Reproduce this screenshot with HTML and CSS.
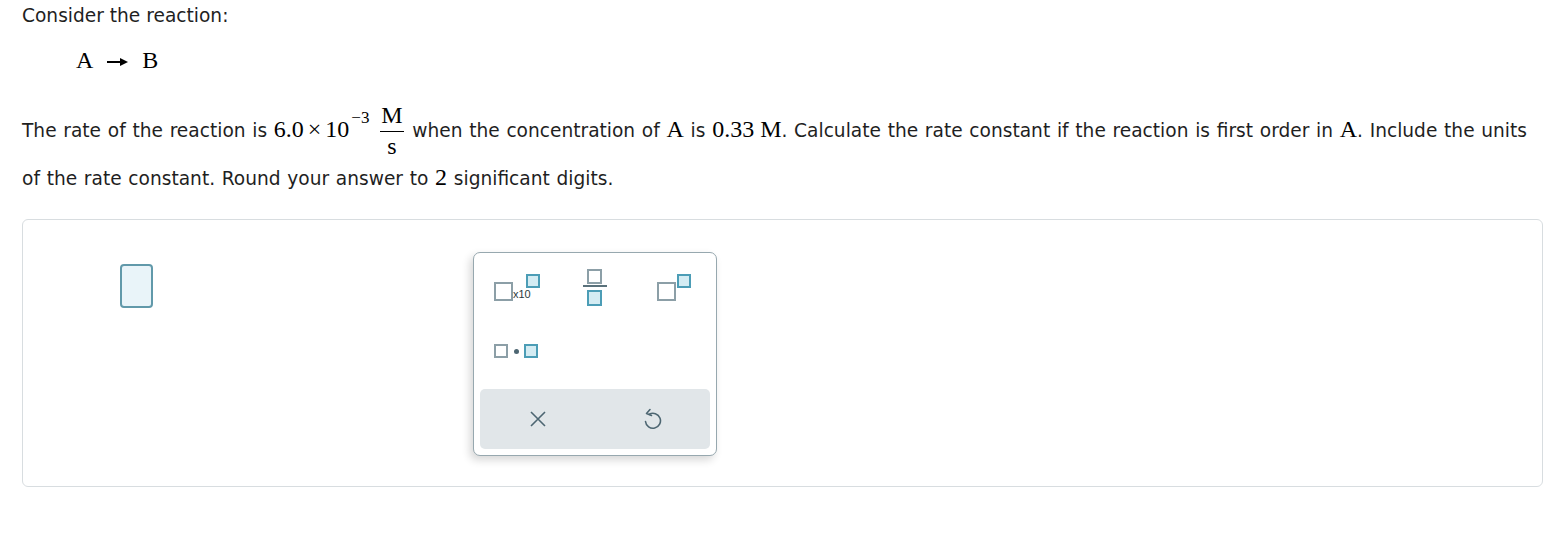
FILE: index.html
```html
<!DOCTYPE html>
<html lang="en">
<head>
<meta charset="utf-8">
<title>Rate constant question</title>
<link rel="stylesheet" href="styles.css">
</head>
<body>
<div class="page">
  <p class="intro">Consider the reaction:</p>
  <div class="reaction">
    <span class="m">A</span>
    <svg class="arrow" width="22" height="10" viewBox="0 0 22 10" aria-hidden="true"><line x1="0" y1="5" x2="14" y2="5" stroke="#000" stroke-width="2"/><polygon points="13,1 21,5 13,9" fill="#000"/></svg>
    <span class="m">B</span>
  </div>
  <p class="question">The rate of the reaction is <span class="m">6.0<span class="times">×</span>10<sup class="sup">−3</sup></span> <span class="frac m"><span class="num">M</span><span class="den">s</span></span> when the concentration of <span class="m">A</span> is <span class="m">0.33 M</span>. Calculate the rate constant if the reaction is first order in <span class="m">A</span>. Include the units of the rate constant. Round your answer to <span class="m">2</span> significant digits.</p>
  <div class="card">
    <div class="answer-box"></div>
    <div class="palette">
      <div class="palette-grid">
        <div class="cell">
          <span class="ico ico-x10"><span class="bx bx-grey bx-lg"></span><span class="x10">x10</span><span class="bx bx-blue bx-sm"></span></span>
        </div>
        <div class="cell">
          <span class="ico ico-frac"><span class="bx bx-grey bx-md"></span><span class="fbar"></span><span class="bx bx-blue bx-md"></span></span>
        </div>
        <div class="cell">
          <span class="ico ico-pow"><span class="bx bx-grey bx-lg"></span><span class="bx bx-blue bx-sm"></span></span>
        </div>
        <div class="cell">
          <span class="ico ico-dot"><span class="bx bx-grey bx-sm"></span><span class="dot"></span><span class="bx bx-blue bx-sm"></span></span>
        </div>
      </div>
      <div class="palette-actions">
        <div class="action">
          <svg width="16" height="16" viewBox="0 0 16 16" aria-hidden="true"><path d="M1 1 L15 15 M15 1 L1 15" stroke="#4d6672" stroke-width="1.6" fill="none"/></svg>
        </div>
        <div class="action">
          <svg width="18" height="22" viewBox="0 0 18 22" aria-hidden="true"><path d="M5.2 6.3 A7.5 7.5 0 1 1 1.5 13.5" stroke="#4d6672" stroke-width="1.6" fill="none" stroke-linecap="round"/><path d="M6 1.5 L2.5 5.5 L7.5 7.5" stroke="#4d6672" stroke-width="1.6" fill="none" stroke-linecap="round" stroke-linejoin="round"/></svg>
        </div>
      </div>
    </div>
  </div>
</div>
</body>
</html>
```

FILE: styles.css
```css
html, body {
  margin: 0;
  padding: 0;
  background: #ffffff;
}

body {
  font-family: "DejaVu Sans", Verdana, sans-serif;
  font-size: 18.6px;
  color: #1f1f1f;
}

.page {
  padding: 4px 13px 0 22px;
  width: 1521px;
}

.intro {
  margin: 0;
  line-height: 24px;
}

.m {
  font-family: "Liberation Serif", "Times New Roman", serif;
  font-size: 24px;
  color: #000;
  word-spacing: 0;
}

.reaction {
  margin: 18px 0 0 54px;
  line-height: 28px;
  display: flex;
  align-items: center;
}

.reaction .arrow {
  margin: 3px 13px 0 14px;
}

.question {
  margin: 30px 0 0 0;
  line-height: 38px;
  word-spacing: 0.8px;
}

.times {
  margin: 0 4px;
}

.sup {
  font-size: 17px;
  line-height: 0;
  vertical-align: 14px;
  margin-left: 2px;
}

.frac {
  display: inline-flex;
  flex-direction: column;
  align-items: center;
  vertical-align: middle;
  margin: 0 2px 0 4px;
}

.frac .num {
  line-height: 23px;
  padding: 0 1px 4px;
  border-bottom: 1px solid #000;
}

.frac .den {
  line-height: 23px;
  padding-top: 3px;
}

.card {
  margin-top: 21px;
  border: 1px solid #d8dde0;
  border-radius: 6px;
  padding: 32px 0 30px 97px;
  display: flex;
  align-items: flex-start;
  gap: 320px;
}

.answer-box {
  margin-top: 12px;
  width: 29px;
  height: 40px;
  background: #e9f4f9;
  border: 2px solid #6199aa;
  border-radius: 4px;
}

.palette {
  width: 230px;
  border: 1px solid #97a8af;
  border-radius: 7px;
  padding: 2px 6px 6px;
  background: #fff;
  box-shadow: -3px 4px 9px rgba(0, 0, 0, 0.16);
  display: flex;
  flex-direction: column;
  gap: 6px;
}

.palette-grid {
  display: grid;
  grid-template-columns: repeat(3, 1fr);
  grid-auto-rows: 64px;
}

.cell {
  display: flex;
  align-items: center;
  justify-content: center;
}

.ico {
  display: flex;
}

.bx {
  box-sizing: border-box;
  border-width: 2px;
  border-style: solid;
}

.bx-grey {
  border-color: #8c9fa7;
  background: #fff;
}

.bx-blue {
  border-color: #4c9db6;
  background: #d4ecf3;
}

.bx-lg {
  width: 19px;
  height: 19px;
}

.bx-md {
  width: 15px;
  height: 15px;
}

.bx-sm {
  width: 14px;
  height: 14px;
}

.ico-x10 {
  align-items: flex-end;
  height: 27px;
  margin-left: -3px;
}

.x10 {
  font-family: "Liberation Sans", Arial, sans-serif;
  font-size: 11px;
  line-height: 11px;
  color: #2b3a40;
  margin-bottom: 1px;
}

.ico-x10 .bx-blue {
  align-self: flex-start;
  margin-left: -5px;
}

.ico-frac {
  flex-direction: column;
  align-items: center;
  margin-top: 1px;
}

.fbar {
  width: 24px;
  height: 2px;
  background: #5a717b;
  margin: 1px 0 3px;
}

.ico-frac .bx-blue {
  height: 16px;
}

.ico-pow {
  align-items: flex-end;
  height: 27px;
  margin-left: 4px;
}

.ico-pow .bx-blue {
  align-self: flex-start;
  margin-left: 1px;
}

.ico-dot {
  align-items: center;
  margin-left: -4px;
}

.dot {
  width: 5px;
  height: 5px;
  border-radius: 50%;
  background: #4d6672;
  margin: 0 5px 0 6px;
}

.palette-actions {
  display: flex;
  height: 60px;
  background: #e1e6e9;
  border-radius: 5px;
}

.action {
  flex: 1;
  display: flex;
  align-items: center;
  justify-content: center;
}
```
